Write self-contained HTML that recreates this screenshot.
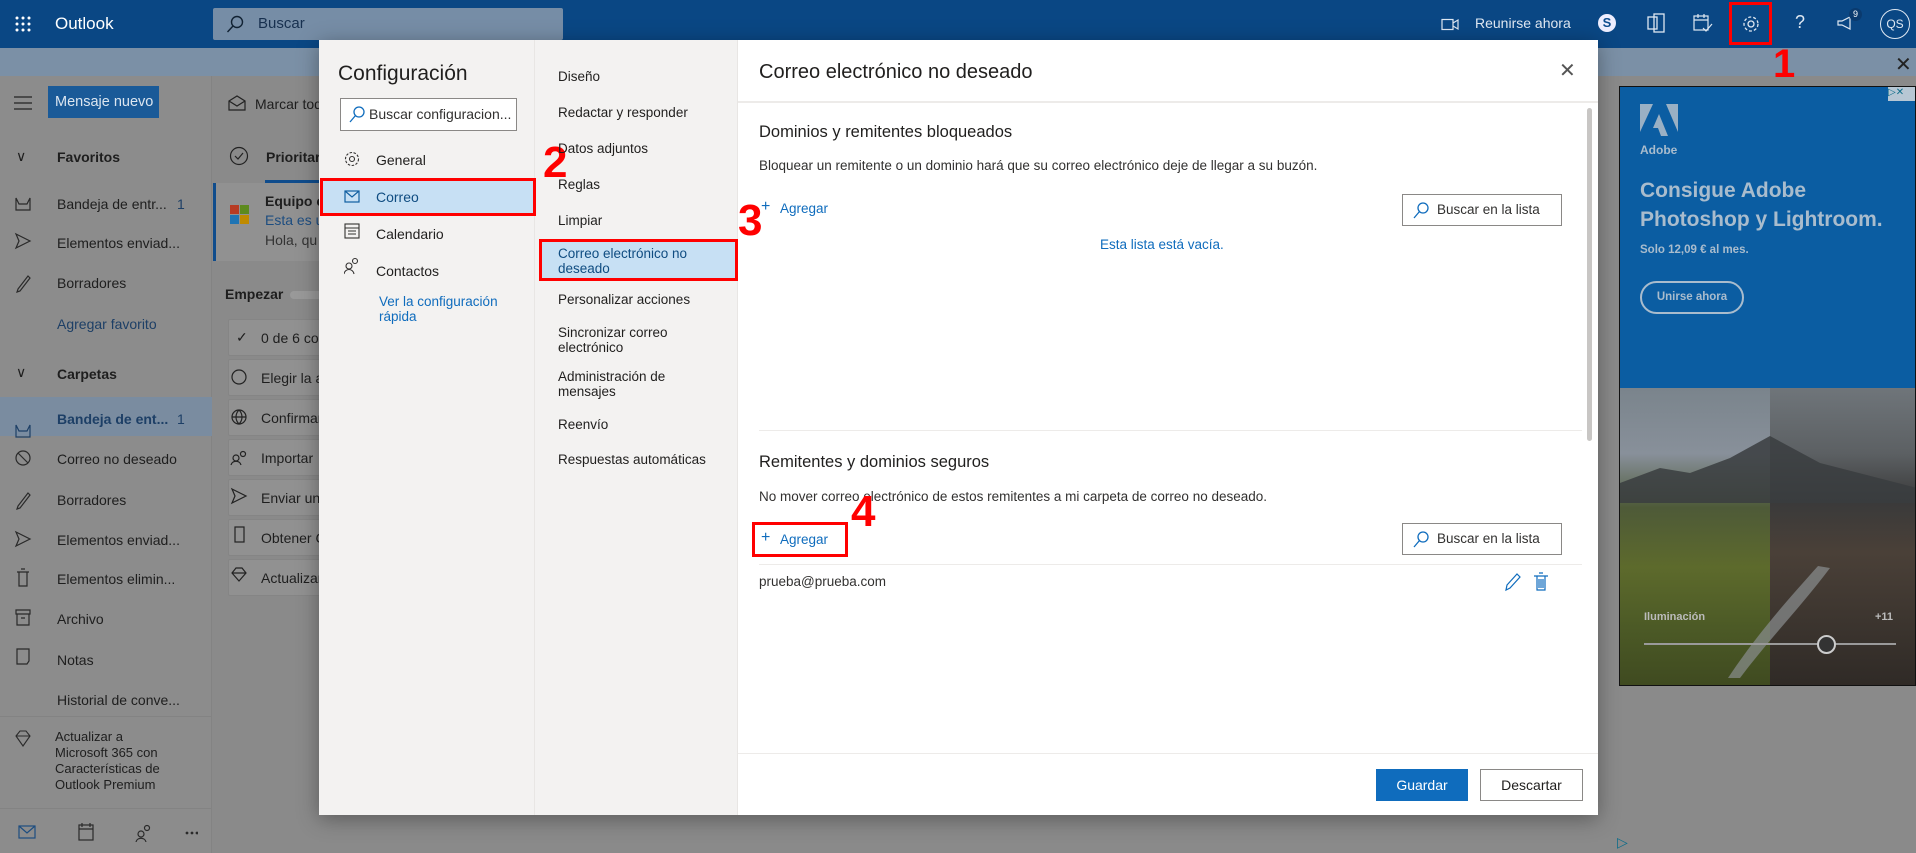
<!DOCTYPE html>
<html><head><meta charset="utf-8">
<style>
*{box-sizing:border-box;margin:0;padding:0}
body{width:1916px;height:853px;overflow:hidden;background:#8a8a8a;font-family:"Liberation Sans",sans-serif;font-size:14px;color:#201f1e;position:relative}
.a{position:absolute;white-space:nowrap}
.top{left:0;top:0;width:1916px;height:48px;background:#0a4784}
.w{color:#fff}
.side{left:0;top:76px;width:212px;height:777px;background:#8c8c8c;border-right:1px solid #838383}
.list{left:213px;top:76px;width:400px;height:777px;background:#8a8a8a}
.card{position:absolute;left:228px;width:380px;height:37px;background:#919191;border:1px solid #858585;border-radius:2px}
.si{color:#1e1e1e;font-size:14px}
.modal{left:319px;top:40px;width:1279px;height:775px;background:#fff;box-shadow:0 4px 20px rgba(0,0,0,.35)}
.c1{left:0;top:0;width:215px;height:775px;background:#f3f2f1}
.c2{left:215px;top:0;width:204px;height:775px;background:#f3f2f1;border-left:1px solid #e8e6e4;border-right:1px solid #e8e6e4}
.red{position:absolute;border:3px solid #f00}
.num{position:absolute;color:#f00;font-weight:bold;font-family:"Liberation Sans",sans-serif;font-size:44px;line-height:1}
.lnk{color:#0f6cbd}
.box{position:absolute;border:1px solid #8a8886;background:#fff;color:#323130;font-size:14px}
</style></head><body>
<!-- top bar -->
<div class="a top"></div>
<svg class="a" style="left:14px;top:15px" width="18" height="18"><g fill="#fff"><circle cx="3" cy="3" r="1.5"/><circle cx="9" cy="3" r="1.5"/><circle cx="15" cy="3" r="1.5"/><circle cx="3" cy="9" r="1.5"/><circle cx="9" cy="9" r="1.5"/><circle cx="15" cy="9" r="1.5"/><circle cx="3" cy="15" r="1.5"/><circle cx="9" cy="15" r="1.5"/><circle cx="15" cy="15" r="1.5"/></g></svg>
<div class="a w" style="left:55px;top:14px;font-size:17px">Outlook</div>
<div class="a" style="left:213px;top:8px;width:350px;height:32px;background:#768da6;border-radius:2px"></div>
<svg class="a" style="left:226px;top:15px" width="18" height="18" fill="none" stroke="#123" stroke-width="1.4"><circle cx="11" cy="7" r="5.5"/><path d="M7 11 L1.5 17"/></svg>
<div class="a" style="left:258px;top:15px;font-size:15px;color:#17304f">Buscar</div>
<svg class="a" style="left:1441px;top:18px" width="18" height="13" fill="none" stroke="#dfe8f2" stroke-width="1.2"><rect x="1" y="1.5" width="11" height="10"/><path d="M12 5 L17 2 V11 L12 8"/></svg>
<div class="a" style="left:1475px;top:15px;font-size:14px;color:#dfe8f2">Reunirse ahora</div>
<div class="a" style="left:1598px;top:14px;width:18px;height:18px;border-radius:50%;background:#eef;color:#0c4b8c;font-size:13px;font-weight:bold;text-align:center;line-height:18px">S</div>
<svg class="a" style="left:1647px;top:13px" width="18" height="20" fill="none" stroke="#dfe8f2" stroke-width="1.3"><rect x="1" y="4" width="9" height="12"/><rect x="7" y="1" width="10" height="18"/></svg>
<svg class="a" style="left:1693px;top:12px" width="20" height="22" fill="none" stroke="#dfe8f2" stroke-width="1.2"><rect x="1" y="4" width="14" height="14"/><path d="M1 8 H15 M5 2 V6 M11 2 V6 M10 16 L13 19 L19 12"/></svg>
<div class="red" style="left:1729px;top:2px;width:43px;height:43px"></div>
<svg class="a" style="left:1741px;top:14px" width="20" height="20" fill="none" stroke="#dfe8f2" stroke-width="1.3"><circle cx="10" cy="10" r="3"/><circle cx="10" cy="10" r="7" stroke-dasharray="3 2"/></svg>
<div class="a" style="left:1795px;top:12px;font-size:18px;color:#dfe8f2">?</div>
<svg class="a" style="left:1836px;top:14px" width="20" height="18" fill="none" stroke="#dfe8f2" stroke-width="1.2"><path d="M2 7 H6 L14 3 V15 L6 11 H2Z"/></svg>
<div class="a" style="left:1849px;top:8px;width:13px;height:13px;border-radius:50%;background:#0a3a6e;color:#fff;font-size:9px;text-align:center;line-height:13px">9</div>
<div class="a" style="left:1880px;top:9px;width:30px;height:30px;border-radius:50%;border:1px solid #dfe8f2;color:#dfe8f2;font-size:12px;text-align:center;line-height:28px">QS</div>
<!-- strip -->
<div class="a" style="left:0;top:48px;width:1916px;height:28px;background:#7b90a6"></div>
<div class="num" style="left:1773px;top:44px;font-size:40px">1</div>
<div class="a" style="left:1895px;top:52px;font-size:20px;color:#222">✕</div>
<!-- sidebar -->
<div class="a side"></div>
<svg class="a" style="left:14px;top:96px" width="18" height="14" stroke="#222" stroke-width="1.3"><path d="M0 1H18M0 7H18M0 13H18"/></svg>
<div class="a" style="left:48px;top:86px;width:111px;height:32px;background:#1a5a98;color:#dce6f0;font-size:14.5px;line-height:32px;padding-left:7px">Mensaje nuevo</div>
<div class="a si" style="left:16px;top:148px;font-size:14px">∨</div>
<div class="a si" style="left:57px;top:149px;font-weight:bold;font-size:14px">Favoritos</div>
<div class="a si" style="left:57px;top:196px">Bandeja de entr...</div><div class="a si" style="left:177px;top:196px;color:#1d3f66">1</div>
<div class="a si" style="left:57px;top:235px">Elementos enviad...</div>
<div class="a si" style="left:57px;top:275px">Borradores</div>
<div class="a si" style="left:57px;top:316px;color:#1d3f66">Agregar favorito</div>
<div class="a si" style="left:16px;top:364px">∨</div>
<div class="a si" style="left:57px;top:366px;font-weight:bold">Carpetas</div>
<div class="a" style="left:0;top:397px;width:212px;height:39px;background:#7a8ca0"></div>
<div class="a si" style="left:57px;top:411px;color:#1d3f66;font-weight:bold">Bandeja de ent...</div><div class="a si" style="left:177px;top:411px;color:#1d3f66">1</div>
<div class="a si" style="left:57px;top:451px">Correo no deseado</div>
<div class="a si" style="left:57px;top:492px">Borradores</div>
<div class="a si" style="left:57px;top:532px">Elementos enviad...</div>
<div class="a si" style="left:57px;top:571px">Elementos elimin...</div>
<div class="a si" style="left:57px;top:611px">Archivo</div>
<div class="a si" style="left:57px;top:652px">Notas</div>
<div class="a si" style="left:57px;top:692px">Historial de conve...</div>
<div class="a" style="left:0;top:716px;width:212px;height:1px;background:#838383"></div>
<svg class="a" style="left:14px;top:730px" width="18" height="18" fill="none" stroke="#2a2a2a" stroke-width="1.1"><path d="M2 6 L6 1 H12 L16 6 L9 16Z M2 6 H16"/></svg>
<div class="a si" style="left:55px;top:729px;font-size:13px;line-height:16px;white-space:normal;width:112px">Actualizar a Microsoft 365 con Características de Outlook Premium</div>
<div class="a" style="left:0;top:808px;width:212px;height:1px;background:#838383"></div>
<svg class="a" style="left:18px;top:822px" width="180" height="20" fill="none" stroke="#2a2a2a" stroke-width="1.2">
<rect x="1" y="4" width="16" height="12" stroke="#1d4d80"/><path d="M1 4 L9 11 L17 4" stroke="#1d4d80"/>
<rect x="61" y="3" width="14" height="15"/><path d="M61 7H75M64 1V5M72 1V5"/>
<circle cx="123" cy="12" r="3"/><circle cx="129" cy="6" r="2.5"/><path d="M118 20 C119 15 127 15 128 20"/>
<circle cx="169" cy="11" r=".8" fill="#2a2a2a"/><circle cx="174" cy="11" r=".8" fill="#2a2a2a"/><circle cx="179" cy="11" r=".8" fill="#2a2a2a"/>
</svg>
<svg class="a" style="left:14px;top:170px" width="18" height="500" fill="none" stroke="#2a2a2a" stroke-width="1.2">
<path d="M2 28 V40 H16 V28 L13 34 H5Z"/>
<path d="M2 64 L16 71 L2 78 L5 71Z"/>
<path d="M4 119 L14 106 L16 108 L6 121 L3 122Z"/>
<path d="M2 255 V267 H16 V255 L13 261 H5Z" stroke="#1d3f66"/>
<circle cx="9" cy="288" r="7"/><path d="M4 283 L14 293"/>
<path d="M4 336 L14 323 L16 325 L6 338 L3 339Z"/>
<path d="M2 362 L16 369 L2 376 L5 369Z"/>
<path d="M3 402 H15 M5 402 V416 H13 V402 M7 399 H11"/>
<path d="M2 440 H16 V444 H2Z M3 444 V455 H15 V444 M7 448 H11"/>
<path d="M3 479 V494 H13 L15 491 V479Z"/>
</svg>
<!-- list panel -->
<div class="a list"></div>
<svg class="a" style="left:228px;top:95px" width="18" height="16" fill="none" stroke="#222" stroke-width="1.2"><path d="M1 6 L9 1 L17 6 V15 H1Z M1 6 L9 11 L17 6"/></svg>
<div class="a si" style="left:255px;top:96px">Marcar tod</div>
<svg class="a" style="left:229px;top:146px" width="20" height="20" fill="none" stroke="#222" stroke-width="1.2"><circle cx="10" cy="10" r="8.5"/><path d="M6 10 L9 13 L14 7"/></svg>
<div class="a si" style="left:266px;top:149px;font-weight:bold">Prioritar</div>
<div class="a" style="left:265px;top:180px;width:55px;height:3px;background:#0f4c8c"></div>
<div class="a" style="left:213px;top:183px;width:110px;height:78px;background:#919191;border-left:3px solid #0f4c8c"></div>
<div class="a" style="left:230px;top:205px;width:9px;height:9px;background:#b73b23"></div><div class="a" style="left:240px;top:205px;width:9px;height:9px;background:#5d8a1e"></div>
<div class="a" style="left:230px;top:215px;width:9px;height:9px;background:#1f74b4"></div><div class="a" style="left:240px;top:215px;width:9px;height:9px;background:#bf8a00"></div>
<div class="a si" style="left:265px;top:193px;font-weight:bold">Equipo c</div>
<div class="a si" style="left:265px;top:212px;color:#1d4d80">Esta es u</div>
<div class="a si" style="left:265px;top:232px;color:#333">Hola, qu</div>
<div class="a si" style="left:225px;top:286px;font-weight:bold">Empezar</div>
<div class="a" style="left:290px;top:291px;width:40px;height:8px;border-radius:4px;background:#999"></div>
<div class="card" style="top:319px"></div><div class="card" style="top:359px"></div><div class="card" style="top:399px"></div><div class="card" style="top:439px"></div><div class="card" style="top:479px"></div><div class="card" style="top:519px"></div><div class="card" style="top:559px"></div>
<div class="a si" style="left:236px;top:329px">✓</div>
<div class="a si" style="left:261px;top:330px">0 de 6 co</div>
<div class="a si" style="left:261px;top:370px">Elegir la a</div>
<div class="a si" style="left:261px;top:410px">Confirmar</div>
<div class="a si" style="left:261px;top:450px">Importar</div>
<div class="a si" style="left:261px;top:490px">Enviar un</div>
<div class="a si" style="left:261px;top:530px">Obtener C</div>
<div class="a si" style="left:261px;top:570px">Actualizar</div>
<svg class="a" style="left:230px;top:365px" width="20" height="220" fill="none" stroke="#222" stroke-width="1.2">
<circle cx="9" cy="12" r="7"/><circle cx="9" cy="52" r="7"/><path d="M2 52H16M9 45 C5 49 5 55 9 59 C13 55 13 49 9 45"/>
<circle cx="6" cy="93" r="3"/><circle cx="13" cy="89" r="2.5"/><path d="M1 100 C2 95 10 95 11 100"/>
<path d="M2 124 L16 131 L2 138 L5 131Z"/><rect x="5" y="162" width="9" height="15"/>
<path d="M2 208 L6 203 H12 L16 208 L9 216Z M2 208 H16"/></svg>
<!-- modal -->
<div class="a modal">
 <div class="a c1"></div>
 <div class="a c2"></div>
 <div class="a" style="left:19px;top:22px;font-size:21px;color:#201f1e">Configuración</div>
 <div class="box" style="left:21px;top:58px;width:177px;height:33px"></div>
 <svg class="a" style="left:30px;top:66px" width="16" height="17" fill="none" stroke="#0f6cbd" stroke-width="1.3"><circle cx="10" cy="6" r="5"/><path d="M6.5 9.5 L1 16"/></svg>
 <div class="a" style="left:50px;top:66px;font-size:14px;color:#323130">Buscar configuracion...</div>
 <svg class="a" style="left:25px;top:111px" width="16" height="160" fill="none" stroke="#323130" stroke-width="1.1">
  <circle cx="8" cy="8" r="2.5"/><circle cx="8" cy="8" r="6.5" stroke-dasharray="2.5 1.5"/>
  <rect x="1" y="40" width="14" height="10" stroke="#0f6cbd"/><path d="M1 40 L8 46 L15 40" stroke="#0f6cbd"/>
  <rect x="1" y="73" width="14" height="14"/><path d="M1 77H15M4 80H12M4 83H12"/>
  <circle cx="5" cy="115" r="3"/><circle cx="11" cy="110" r="2.5"/><path d="M0 123 C1 117 9 117 10 123"/>
 </svg>
 <div class="a" style="left:57px;top:112px;font-size:14px">General</div>
 <div class="a" style="left:1px;top:138px;width:214px;height:38px;background:#c7e0f4"></div>
 <div class="red" style="left:1px;top:138px;width:216px;height:38px"></div>
 <svg class="a" style="left:25px;top:150px" width="16" height="13" fill="none" stroke="#0f5ea0" stroke-width="1.2"><rect x="1" y="1" width="14" height="11"/><path d="M1 1 L8 7 L15 1"/></svg>
 <div class="a" style="left:57px;top:149px;font-size:14px;color:#0f4c81">Correo</div>
 <div class="a" style="left:57px;top:186px;font-size:14px">Calendario</div>
 <div class="a" style="left:57px;top:223px;font-size:14px">Contactos</div>
 <div class="a lnk" style="left:60px;top:254px;font-size:13.5px;line-height:15px">Ver la configuración<br>rápida</div>
 <div class="num" style="left:224px;top:101px">2</div>
 <div class="a" style="left:239px;top:19px;font-size:13.5px;line-height:36px">Diseño<br>Redactar y responder<br>Datos adjuntos<br>Reglas<br>Limpiar</div>
 <div class="a" style="left:220px;top:199px;width:199px;height:41px;background:#c7e0f4"></div>
 <div class="red" style="left:220px;top:199px;width:199px;height:42px"></div>
 <div class="a" style="left:239px;top:206px;font-size:13.5px;line-height:15px;color:#0f4c81">Correo electrónico no<br>deseado</div>
 <div class="a" style="left:239px;top:252px;font-size:13.5px">Personalizar acciones</div>
 <div class="a" style="left:239px;top:285px;font-size:13.5px;line-height:15px">Sincronizar correo<br>electrónico</div>
 <div class="a" style="left:239px;top:329px;font-size:13.5px;line-height:15px">Administración de<br>mensajes</div>
 <div class="a" style="left:239px;top:377px;font-size:13.5px">Reenvío</div>
 <div class="a" style="left:239px;top:412px;font-size:13.5px">Respuestas automáticas</div>
 <!-- right -->
 <div class="a" style="left:440px;top:21px;font-size:20px;color:#201f1e">Correo electrónico no deseado</div>
 <div class="a" style="left:1240px;top:18px;font-size:20px;color:#555">✕</div>
 <div class="a" style="left:419px;top:61px;width:860px;height:2px;background:#edebe9"></div>
 <div class="a" style="left:1268px;top:68px;width:5px;height:333px;border-radius:3px;background:#c8c6c4"></div>
 <div class="a" style="left:440px;top:83px;font-size:16.5px;color:#201f1e">Dominios y remitentes bloqueados</div>
 <div class="a" style="left:440px;top:118px;font-size:13.5px;color:#323130">Bloquear un remitente o un dominio hará que su correo electrónico deje de llegar a su buzón.</div>
 <div class="a lnk" style="left:442px;top:158px;font-size:16px">+</div>
 <div class="num" style="left:419px;top:159px">3</div>
 <div class="a lnk" style="left:461px;top:161px;font-size:13.5px">Agregar</div>
 <div class="box" style="left:1083px;top:154px;width:160px;height:32px"></div>
 <svg class="a" style="left:1094px;top:162px" width="16" height="17" fill="none" stroke="#0f6cbd" stroke-width="1.3"><circle cx="10" cy="6" r="5"/><path d="M6.5 9.5 L1 16"/></svg>
 <div class="a" style="left:1118px;top:162px;font-size:13.5px;color:#323130">Buscar en la lista</div>
 <div class="a lnk" style="left:781px;top:197px;font-size:13.5px">Esta lista está vacía.</div>
 <div class="a" style="left:440px;top:390px;width:823px;height:1px;background:#edebe9"></div>
 <div class="a" style="left:440px;top:413px;font-size:16.5px;color:#201f1e">Remitentes y dominios seguros</div>
 <div class="a" style="left:440px;top:449px;font-size:13.5px;color:#323130">No mover correo electrónico de estos remitentes a mi carpeta de correo no deseado.</div>
 <div class="red" style="left:433px;top:482px;width:96px;height:35px"></div>
 <div class="a lnk" style="left:442px;top:489px;font-size:16px">+</div>
 <div class="a lnk" style="left:461px;top:492px;font-size:13.5px">Agregar</div>
 <div class="num" style="left:532px;top:450px">4</div>
 <div class="box" style="left:1083px;top:483px;width:160px;height:32px"></div>
 <svg class="a" style="left:1094px;top:491px" width="16" height="17" fill="none" stroke="#0f6cbd" stroke-width="1.3"><circle cx="10" cy="6" r="5"/><path d="M6.5 9.5 L1 16"/></svg>
 <div class="a" style="left:1118px;top:491px;font-size:13.5px;color:#323130">Buscar en la lista</div>
 <div class="a" style="left:440px;top:524px;width:823px;height:1px;background:#edebe9"></div>
 <div class="a" style="left:440px;top:534px;font-size:13.5px;color:#323130">prueba@prueba.com</div>
 <svg class="a" style="left:1185px;top:532px" width="50" height="20" fill="none" stroke="#0f6cbd" stroke-width="1.2"><path d="M2 18 L3 13 L13 2 L16 5 L6 16Z"/><path d="M30 4 H44 M33 4 V18 H41 V4 M35 1 H39 M35 7 V16 M37 7 V16 M39 7 V16"/></svg>
 <div class="a" style="left:419px;top:713px;width:860px;height:1px;background:#edebe9"></div>
 <div class="a" style="left:1057px;top:729px;width:92px;height:32px;background:#0f6cbd;color:#fff;font-size:14px;text-align:center;line-height:32px">Guardar</div>
 <div class="a" style="left:1161px;top:729px;width:103px;height:32px;border:1px solid #8a8886;color:#201f1e;font-size:14px;text-align:center;line-height:30px">Descartar</div>
</div>
<!-- ad -->
<div class="a" style="left:1619px;top:86px;width:297px;height:600px;background:#0b5da2;border:1px solid #111;overflow:hidden">
 <div class="a" style="left:0;top:301px;width:150px;height:299px;background:linear-gradient(180deg,#7a848c 0%,#88909a 22%,#4e5a38 40%,#5d6a2c 60%,#4c5a26 80%,#3f4a20 100%)"></div>
 <div class="a" style="left:150px;top:301px;width:147px;height:299px;background:linear-gradient(180deg,#6f757a 0%,#5c6063 22%,#3a3a3a 38%,#4a4038 55%,#3b342e 80%,#2f2a26 100%)"></div>
 <svg class="a" style="left:0;top:301px" width="297" height="299"><path d="M0 95 L40 80 L70 85 L110 70 L150 48 L200 75 L297 100 V115 H0Z" fill="#3a3d40" opacity=".85"/><path d="M120 290 C150 250 180 220 210 180 L198 178 C165 215 138 245 108 290Z" fill="#8a8e90" opacity=".7"/></svg>
 <svg class="a" style="left:20px;top:17px" width="40" height="32"><path d="M0 0 H13 L0 28Z M26 0 H38 V28Z M19 10 L28 32 H21 L18 24 H13Z" fill="#9ab0c4"/></svg>
 <div class="a" style="left:20px;top:56px;font-size:12px;font-weight:bold;color:#a9bccd">Adobe</div>
 <div class="a" style="left:20px;top:89px;font-size:21px;font-weight:bold;color:#a9bccd;line-height:29px">Consigue Adobe<br>Photoshop y Lightroom.</div>
 <div class="a" style="left:20px;top:157px;font-size:11.5px;font-weight:bold;color:#a9bccd">Solo 12,09 € al mes.</div>
 <div class="a" style="left:20px;top:194px;width:104px;height:33px;border:2px solid #a9bccd;border-radius:17px;color:#a9bccd;font-size:11.5px;font-weight:bold;text-align:center;line-height:29px">Unirse ahora</div>
 <div class="a" style="left:268px;top:0;width:28px;height:14px;background:#b7c7d4;font-size:10px;color:#0b6c8a">▷✕</div>
 <div class="a" style="left:24px;top:524px;font-size:11px;font-weight:bold;color:#bbb">Iluminación</div>
 <div class="a" style="left:255px;top:524px;font-size:11px;font-weight:bold;color:#bbb">+11</div>
 <div class="a" style="left:24px;top:556px;width:252px;height:2px;background:#9a9a9a"></div>
 <div class="a" style="left:197px;top:548px;width:19px;height:19px;border-radius:50%;border:2px solid #ccc;background:#333"></div>
</div>
<div class="a" style="left:1617px;top:834px;font-size:14px;color:#0b6c8a">▷</div>
</body></html>
